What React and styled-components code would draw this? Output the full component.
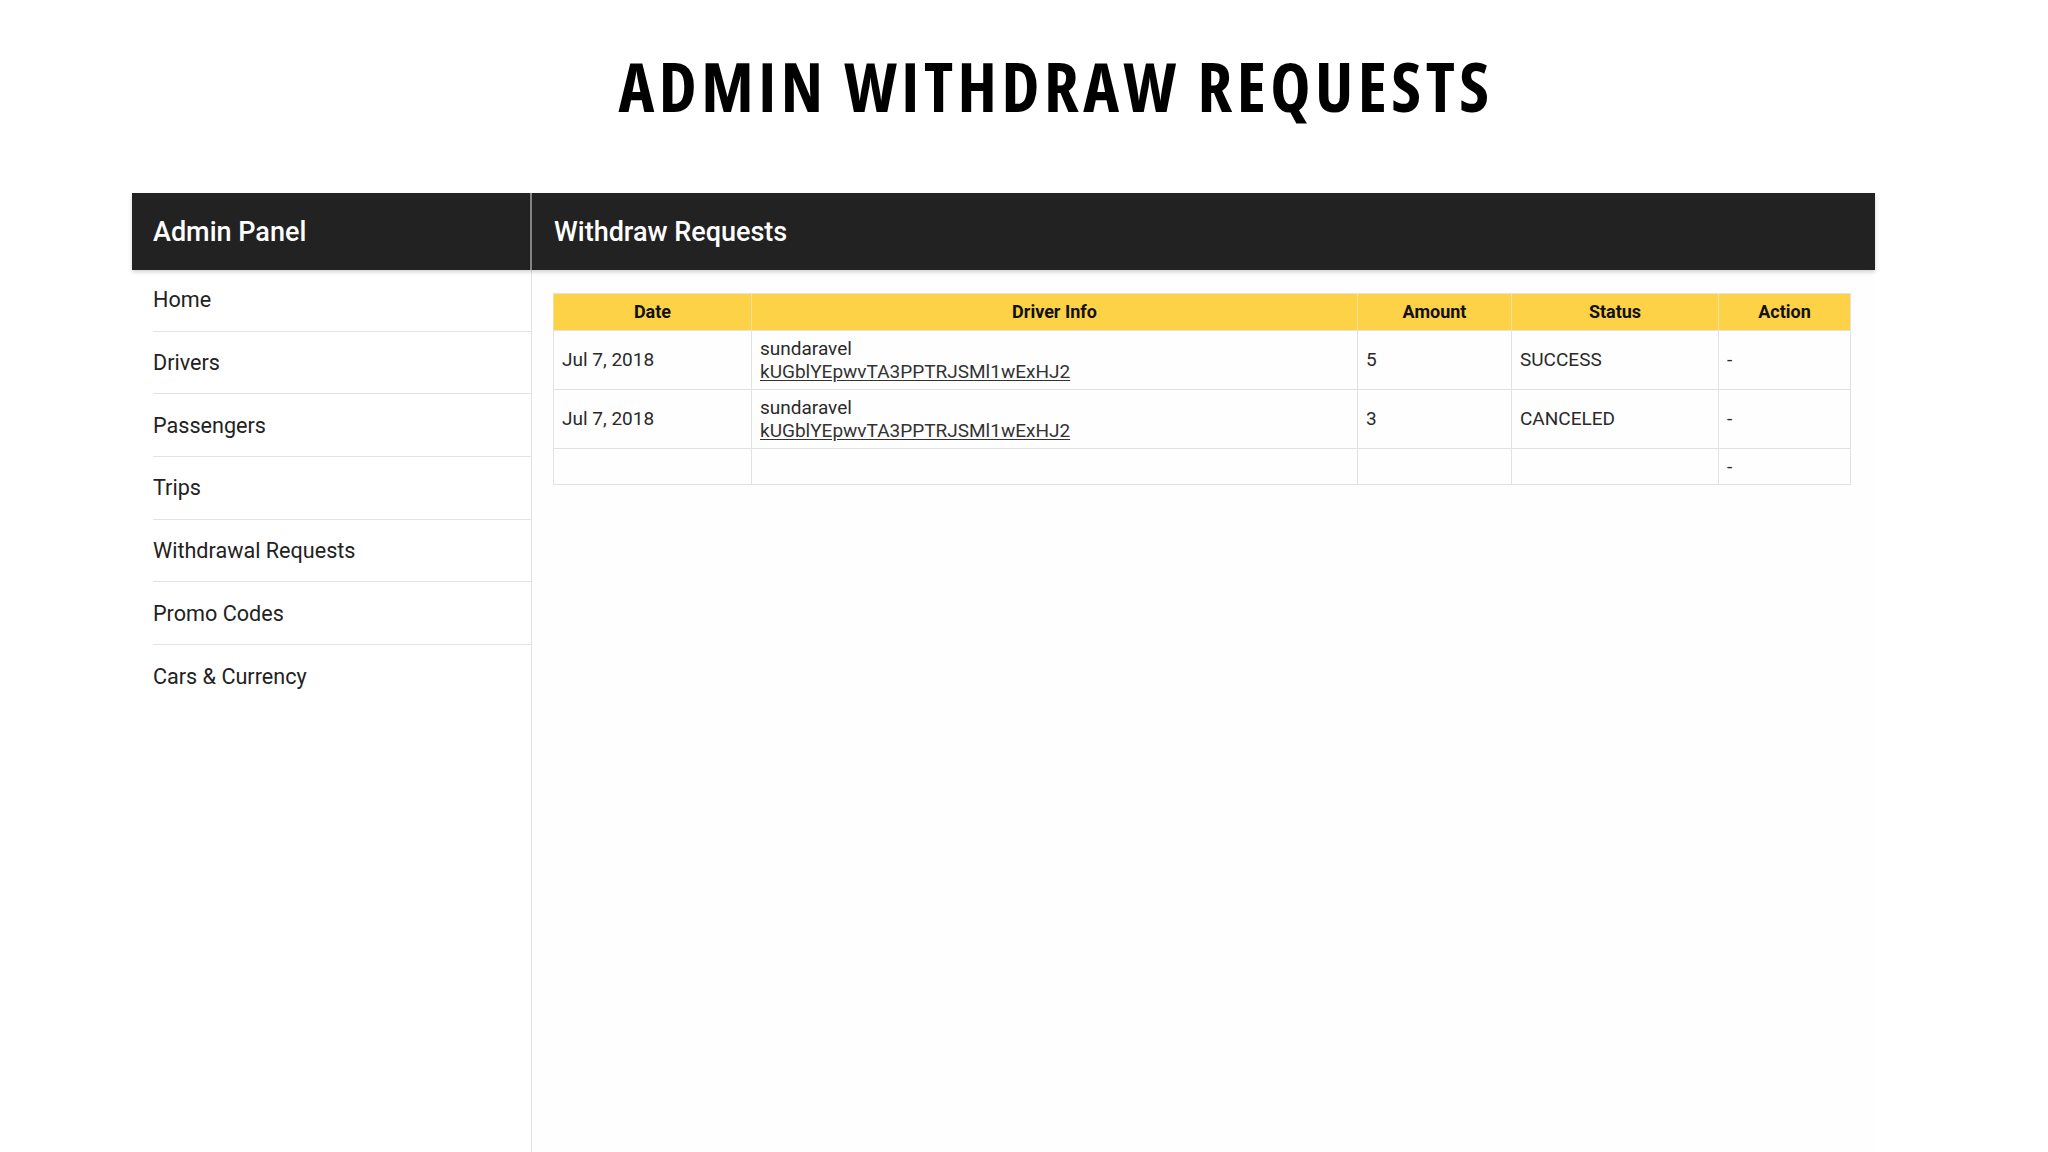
import React from 'react'
import styled, { createGlobalStyle } from 'styled-components'

// ------------------------------------------Global---------------------------------------------

const GlobalStyle = createGlobalStyle`
    html, body {
        margin:0;
        padding:0;
        background:#ffffff;
    }
    #root {
        min-height:100vh;
    }
    * {
        box-sizing:border-box;
    }
`

// ------------------------------------------Styled---------------------------------------------

const Page = styled.div`
    display:flex;
    flex-direction:column;
    height:100vh;
    font-family:Roboto, 'Liberation Sans', sans-serif;
`
const Title = styled.h1`
    margin:0;
    height:193px;
    padding-top:41px;
    padding-left:64px;
    text-align:center;
    font-family:'Open Sans', 'Liberation Sans', sans-serif;
    font-weight:700;
    font-size:68px;
    font-stretch:condensed;
    letter-spacing:4.5px;
    line-height:90px;
    color:#000000;
`
const Frame = styled.div`
    flex:1;
    display:flex;
    margin:0 173px 0 132px;
    min-height:0;
`
const Sidebar = styled.aside`
    width:402px;
    display:flex;
    flex-direction:column;
    background:#ffffff;
`
const Main = styled.section`
    flex:1;
    display:flex;
    flex-direction:column;
    background:#fefefe;
`
const BarHeader = styled.header`
    height:77px;
    display:flex;
    align-items:center;
    padding-left:${p => p.$pad}px;
    background:#222222;
    color:#ffffff;
    font-size:27px;
    font-weight:500;
    box-shadow:0 2px 4px rgba(0,0,0,0.18);
    border-right:${p => p.$divider ? '2px solid #8c8c8c' : 'none'};
    position:relative;
    z-index:1;
`
const NavList = styled.nav`
    flex:1;
    display:flex;
    flex-direction:column;
    margin-top:-1px;
    border-right:1px solid #e3e3e3;
`
const NavItem = styled.a`
    height:62.7px;
    margin-left:21px;
    display:flex;
    align-items:center;
    border-bottom:${p => p.$last ? 'none' : '1px solid #e3e3e3'};
    color:#222222;
    font-size:21.6px;
    text-decoration:none;
    cursor:pointer;
`
const Content = styled.div`
    padding:23px 24px 23px 21px;
`
const Table = styled.table`
    width:1297px;
    table-layout:fixed;
    border-collapse:collapse;
    border:1px solid #e2e2e2;
`
const HeadCell = styled.th`
    background:#fdd247;
    padding:7.25px 8px;
    line-height:21px;
    font-size:18px;
    font-weight:700;
    color:#111111;
    text-align:center;
    border-left:1px solid #f3e3a0;
`
const Cell = styled.td`
    padding:6px 8px;
    line-height:23px;
    font-size:19px;
    color:#2a2a2a;
    vertical-align:middle;
    border:1px solid #e2e2e2;
    background:#fefefe;
`
const UidLink = styled.a`
    color:#333333;
    text-decoration:underline;
    text-underline-offset:2px;
`

// -------------------------------------------Data---------------------------------------------

const menu = ['Home', 'Drivers', 'Passengers', 'Trips', 'Withdrawal Requests', 'Promo Codes', 'Cars & Currency']
const columns = [
    { label: 'Date', width: 198 },
    { label: 'Driver Info', width: 606 },
    { label: 'Amount', width: 154 },
    { label: 'Status', width: 207 },
    { label: 'Action', width: 132 },
]
const requests = [
    { date: 'Jul 7, 2018', name: 'sundaravel', uid: 'kUGblYEpwvTA3PPTRJSMl1wExHJ2', amount: '5', status: 'SUCCESS' },
    { date: 'Jul 7, 2018', name: 'sundaravel', uid: 'kUGblYEpwvTA3PPTRJSMl1wExHJ2', amount: '3', status: 'CANCELED' },
    { date: '', name: '', uid: '', amount: '', status: '' },
]

// -------------------------------------------Structure---------------------------------------------

export default function App() {
    return (
        <Page>
            <GlobalStyle />
            <Title>ADMIN WITHDRAW REQUESTS</Title>
            <Frame>
                <Sidebar>
                    <BarHeader $pad={21} $divider>Admin Panel</BarHeader>
                    <NavList>
                        {menu.map((item, i) => (
                            <NavItem key={item} $last={i === menu.length - 1}>{item}</NavItem>
                        ))}
                    </NavList>
                </Sidebar>
                <Main>
                    <BarHeader $pad={22}>Withdraw Requests</BarHeader>
                    <Content>
                        <Table>
                            <colgroup>
                                {columns.map(c => <col key={c.label} style={{ width: c.width }} />)}
                            </colgroup>
                            <thead>
                                <tr>
                                    {columns.map(c => <HeadCell key={c.label}>{c.label}</HeadCell>)}
                                </tr>
                            </thead>
                            <tbody>
                                {requests.map((r, i) => (
                                    <tr key={i}>
                                        <Cell>{r.date}</Cell>
                                        <Cell>
                                            {r.name && <div>{r.name}</div>}
                                            {r.uid && <UidLink>{r.uid}</UidLink>}
                                        </Cell>
                                        <Cell>{r.amount}</Cell>
                                        <Cell>{r.status}</Cell>
                                        <Cell>-</Cell>
                                    </tr>
                                ))}
                            </tbody>
                        </Table>
                    </Content>
                </Main>
            </Frame>
        </Page>
    )
}
